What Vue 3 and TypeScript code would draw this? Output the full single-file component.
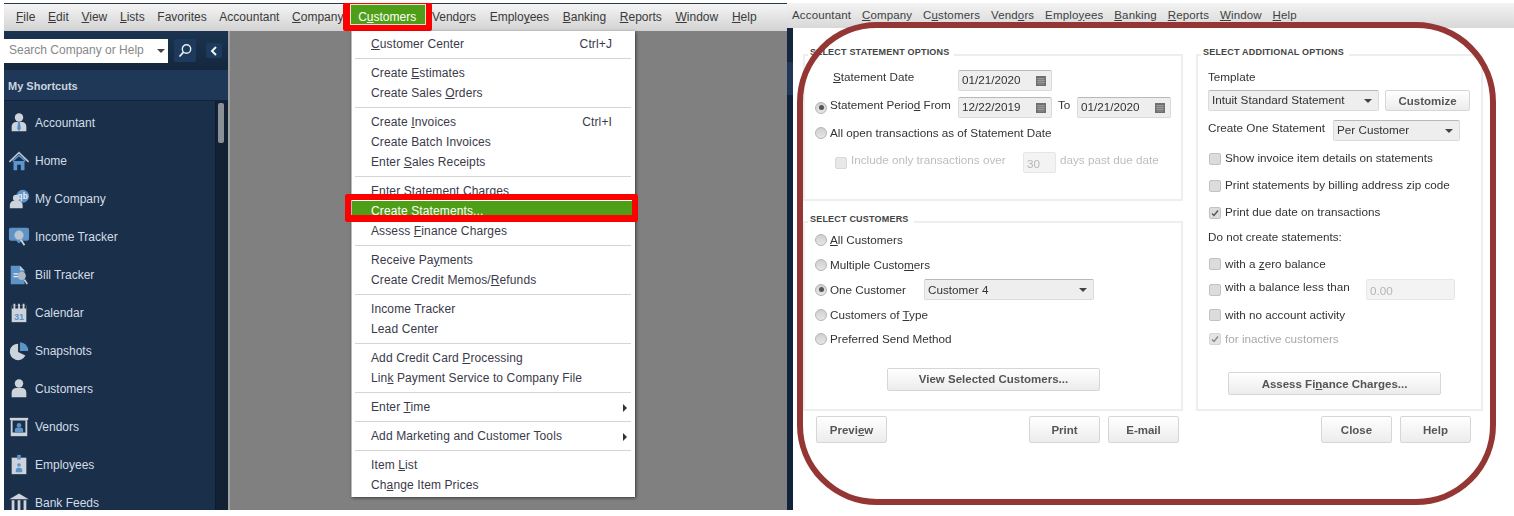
<script setup lang="ts">
const parts = (s: string): [string, string, string] => {
  const i = s.indexOf('&')
  if (i < 0) return [s, '', '']
  return [s.slice(0, i), s.charAt(i + 1), s.slice(i + 2)]
}
const leftMenu = ['&File', '&Edit', '&View', '&Lists', 'Favorites', 'Accountant', '&Company', 'C&ustomers', 'Vend&ors', 'Emplo&yees', '&Banking', '&Reports', '&Window', '&Help']
const rightMenu = ['Accountant', '&Company', 'C&ustomers', 'Vend&ors', 'Emplo&yees', '&Banking', '&Reports', '&Window', '&Help']
const shortcuts = ['Accountant', 'Home', 'My Company', 'Income Tracker', 'Bill Tracker', 'Calendar', 'Snapshots', 'Customers', 'Vendors', 'Employees', 'Bank Feeds']
type Item = { t: string; k?: string; arrow?: boolean; hi?: boolean }
const groups: Item[][] = [
  [{ t: '&Customer Center', k: 'Ctrl+J' }],
  [{ t: 'Create &Estimates' }, { t: 'Create Sales &Orders' }],
  [{ t: 'Create &Invoices', k: 'Ctrl+I' }, { t: 'Create Batch Invoices' }, { t: 'Enter &Sales Receipts' }],
  [{ t: 'Enter Statement Charges' }, { t: 'Create Statements...', hi: true }, { t: 'Assess &Finance Charges' }],
  [{ t: 'Receive Pa&yments' }, { t: 'Create Credit Memos/&Refunds' }],
  [{ t: 'Income Tracker' }, { t: 'Lead Center' }],
  [{ t: 'Add Credit Card &Processing' }, { t: 'Lin&k Payment Service to Company File' }],
  [{ t: 'Enter &Time', arrow: true }],
  [{ t: 'Add Marketing and Customer Tools', arrow: true }],
  [{ t: 'Item &List' }, { t: 'Ch&ange Item Prices' }],
]
</script>

<template>
  <div class="page">
    <section class="qb">
      <nav class="bar">
        <span v-for="m in leftMenu" :key="m" class="bar-item" :class="{ active: m === 'C&ustomers' }">{{ parts(m)[0] }}<u>{{ parts(m)[1] }}</u>{{ parts(m)[2] }}</span>
      </nav>
      <div class="workspace">
        <aside class="side">
          <div class="search-row">
            <div class="search"><span>Search Company or Help</span><i class="tri"></i></div>
            <div class="search-btn">
              <svg width="16" height="16" viewBox="0 0 16 16"><circle cx="9.500" cy="6" r="4.200" fill="none" stroke="#e8eef4" stroke-width="1.400"/><path d="M6.500 9.200 2.500 13.500" stroke="#e8eef4" stroke-width="1.800"/></svg>
            </div>
            <div class="back-btn">
              <svg width="8" height="10" viewBox="0 0 8 10"><path d="M6 1 2 5l4 4" fill="none" stroke="#f2f4f6" stroke-width="2"/></svg>
            </div>
          </div>
          <div class="shortcuts-title">My Shortcuts</div>
          <div class="list">
            <div class="rows">
              <div v-for="s in shortcuts" :key="s" class="row">
                <svg class="ico" width="22" height="22" viewBox="0 0 24 24">
                  <g v-if="s === 'Accountant'">
                    <circle cx="12" cy="6" r="4.600" fill="#ccd3da"/><path d="M4 21v-5c0-3 2-5 5-5h6c3 0 5 2 5 5v5z" fill="#ccd3da"/><path d="M11 11h2l1 7-2 3-2-3z" fill="#5b8fc4"/>
                  </g>
                  <g v-else-if="s === 'Home'">
                    <path d="M6 12h12v10h-4v-6h-4v6H6z" fill="#5b96cf"/><path d="M1.500 13 12 3l10.500 10" fill="none" stroke="#b8c2cc" stroke-width="1.800"/><path d="M5 11 12 5l7 6v2L12 7l-7 6z" fill="#5b96cf"/>
                  </g>
                  <g v-else-if="s === 'My Company'">
                    <circle cx="16" cy="9" r="7" fill="#5e93c8"/><text x="16" y="12" text-anchor="middle" class="qb-mark">qb</text><circle cx="9" cy="11" r="3.600" fill="#ccd3da"/><path d="M2 22v-3c0-3 2-5 5-5h4c3 0 5 2 5 5v3z" fill="#ccd3da"/>
                  </g>
                  <g v-else-if="s === 'Income Tracker'">
                    <path d="M3 2h18a2 2 0 0 1 2 2v10a2 2 0 0 1-2 2h-6l-3 3-3-3H3a2 2 0 0 1-2-2V4a2 2 0 0 1 2-2z" fill="#5e93c8"/><circle cx="12" cy="10" r="5" fill="#b8c4cf"/><path d="M14 15l4 6" stroke="#ccd3da" stroke-width="2"/>
                  </g>
                  <g v-else-if="s === 'Bill Tracker'">
                    <path d="M3 2h10l5 5v15H3z" fill="#5e93c8"/><path d="M13 2v5h5z" fill="#b4cbe0"/><path d="M6 10h5v1.500H6zm0 3h5v1.500H6z" fill="#e8eef4"/><circle cx="15" cy="13" r="4.500" fill="#aeb9c4"/><path d="M18 17l3 5" stroke="#ccd3da" stroke-width="1.800"/>
                  </g>
                  <g v-else-if="s === 'Calendar'">
                    <path d="M4 4h16v18H4z" fill="#ccd3da"/><path d="M6 2h2v5H6zm5 0h2v5h-2zm5 0h2v5h-2z" fill="#ccd3da"/><path d="M4 4h2v3H4zm4 0h3v3H8zm5 0h3v3h-3zm5 0h2v3h-2z" fill="#1a2f4a"/><text x="12" y="20" text-anchor="middle" class="cal-mark">31</text>
                  </g>
                  <g v-else-if="s === 'Snapshots'">
                    <path d="M11 4a9 9 0 1 0 8 13l-8-4z" fill="#ccd3da"/><path d="M13 2.500a9 9 0 0 1 9 9.500h-9z" fill="#5e93c8"/>
                  </g>
                  <g v-else-if="s === 'Customers'">
                    <circle cx="12" cy="6" r="4.600" fill="#ccd3da"/><path d="M4 21v-5c0-3 2-5 5-5h6c3 0 5 2 5 5v5z" fill="#ccd3da"/>
                  </g>
                  <g v-else-if="s === 'Vendors'">
                    <path d="M2 2h20v2.500H2z" fill="#ccd3da"/><path d="M3 4.500h18V22H3z" fill="#ccd3da"/><path d="M5 5h14v13H5z" fill="#1a2f4a"/><circle cx="12" cy="10" r="2.500" fill="#5e93c8"/><path d="M7.500 18v-3c0-1.500 1-2.500 2.500-2.500h4c1.500 0 2.500 1 2.500 2.500v3z" fill="#5e93c8"/>
                  </g>
                  <g v-else-if="s === 'Employees'">
                    <path d="M4 4h16v18H4z" fill="#ccd3da"/><path d="M10 1h4v5h-4z" fill="#5e93c8"/><circle cx="12" cy="12" r="2" fill="#5e93c8"/><path d="M8.500 20v-2.500c0-1.500 1-2.500 2.500-2.500h2c1.500 0 2.500 1 2.500 2.500V20z" fill="#5e93c8"/>
                  </g>
                  <g v-else>
                    <path d="M12 1.500 22.500 8h-21z" fill="#ccd3da"/><path d="M4 9h3v11H4zm6.500 0h3v11h-3zM17 9h3v11h-3z" fill="#ccd3da"/><path d="M2 20h20v4H2z" fill="#5e93c8"/>
                  </g>
                </svg>
                <span>{{ s }}</span>
              </div>
            </div>
            <div class="track"><div class="thumb"></div></div>
          </div>
        </aside>
        <main class="gray"></main>
      </div>

      <div class="menu">
        <template v-for="(g, i) in groups" :key="i">
          <div v-if="i" class="sep"></div>
          <div v-for="it in g" :key="it.t" class="menu-item" :class="{ hi: it.hi }">
            <span>{{ parts(it.t)[0] }}<u>{{ parts(it.t)[1] }}</u>{{ parts(it.t)[2] }}</span>
            <span v-if="it.k">{{ it.k }}</span>
            <i v-if="it.arrow" class="arrow"></i>
          </div>
        </template>
      </div>
      <div class="red red-top"></div>
      <div class="red red-item"></div>
    </section>

    <div class="strip"></div>

    <section class="right">
      <nav class="bar2">
        <span v-for="m in rightMenu" :key="m">{{ parts(m)[0] }}<u>{{ parts(m)[1] }}</u>{{ parts(m)[2] }}</span>
      </nav>
      <div class="dialog">
        <div class="col-left">
          <div class="set set1">
            <div class="legend">SELECT STATEMENT OPTIONS</div>
            <div class="d-row h21">
              <span class="lbl-date raise"><u>S</u>tatement Date</span>
              <div class="field w94 datef"><span>01/21/2020</span><svg class="cal" width="12" height="12" viewBox="0 0 12 12"><path d="M1 1h10v10H1z" fill="#6f6f6f"/><path d="M2 3.500h8M2 5.500h8M2 7.500h8M4 3v7M6 3v7M8 3v7" stroke="#aaa" stroke-width=".6"/></svg></div>
            </div>
            <div class="d-row h21 mt6">
              <i class="radio on"></i>
              <span class="lbl-period raise2">Statement Perio<u>d</u> From</span>
              <div class="field w94 datef"><span>12/22/2019</span><svg class="cal" width="12" height="12" viewBox="0 0 12 12"><path d="M1 1h10v10H1z" fill="#6f6f6f"/><path d="M2 3.500h8M2 5.500h8M2 7.500h8M4 3v7M6 3v7M8 3v7" stroke="#aaa" stroke-width=".6"/></svg></div>
              <span class="to raise2">To</span>
              <div class="field w94 datef"><span>01/21/2020</span><svg class="cal" width="12" height="12" viewBox="0 0 12 12"><path d="M1 1h10v10H1z" fill="#6f6f6f"/><path d="M2 3.500h8M2 5.500h8M2 7.500h8M4 3v7M6 3v7M8 3v7" stroke="#aaa" stroke-width=".6"/></svg></div>
            </div>
            <div class="d-row h20 mt5">
              <i class="radio"></i><span>All open transactions as of Statement Date</span>
            </div>
            <div class="d-row h21 mt9 dim">
              <i class="check sub"></i>
              <span class="lbl-over raise2">Include only transactions over</span>
              <div class="num w33">30</div>
              <span class="days raise2">days past due date</span>
            </div>
          </div>
          <div class="set set2">
            <div class="legend">SELECT CUSTOMERS</div>
            <div class="c-row"><i class="radio"></i><span><u>A</u>ll Customers</span></div>
            <div class="c-row"><i class="radio"></i><span>Multiple Custo<u>m</u>ers</span></div>
            <div class="c-row"><i class="radio on"></i><span class="lbl-one">One Customer</span>
              <div class="field w170"><span>Customer 4</span><i class="tri"></i></div>
            </div>
            <div class="c-row"><i class="radio"></i><span>Customers of <u>T</u>ype</span></div>
            <div class="c-row"><i class="radio"></i><span>Preferred Send Method</span></div>
            <button class="btn view">View Selected Customers...</button>
          </div>
          <div class="foot">
            <button class="btn fb">Previ<u>e</u>w</button>
            <div class="foot-end">
              <button class="btn fb">Print</button>
              <button class="btn fb">E-mail</button>
            </div>
          </div>
        </div>

        <div class="col-right">
          <div class="set set3">
            <div class="legend">SELECT ADDITIONAL OPTIONS</div>
            <div class="d-row h20">Template</div>
            <div class="d-row h21 mt3">
              <div class="field w171"><span>Intuit Standard Statement</span><i class="tri"></i></div>
              <button class="btn customize">Customize</button>
            </div>
            <div class="d-row h21 mt9">
              <span class="lbl-create raise2">Create One Statement</span>
              <div class="field w127"><span>Per Customer</span><i class="tri"></i></div>
            </div>
            <div class="chk-row first"><i class="check"></i><span>Show invoice item details on statements</span></div>
            <div class="chk-row"><i class="check"></i><span>Print statements by billing address zip code</span></div>
            <div class="chk-row"><i class="check"><svg width="10" height="10" viewBox="0 0 10 10"><path d="M2 5.500 4 7.500 8 2.500" fill="none" stroke="#555" stroke-width="1.400"/></svg></i><span>Print due date on transactions</span></div>
            <div class="d-row h22">Do not create statements:</div>
            <div class="d-row h22 mt5"><i class="check gap"></i><span>with a <u>z</u>ero balance</span></div>
            <div class="d-row h21 mt4 balance">
              <i class="check gap raise2"></i><span class="lbl-bal raise2">with a balance less than</span>
              <div class="num w89">0.00</div>
            </div>
            <div class="d-row h22 mt4"><i class="check gap"></i><span>with no account activity</span></div>
            <div class="d-row h22 mt2 dim-text"><i class="check gap faded"><svg width="10" height="10" viewBox="0 0 10 10"><path d="M2 5.500 4 7.500 8 2.500" fill="none" stroke="#888" stroke-width="1.400"/></svg></i><span>for inactive customers</span></div>
            <button class="btn assess">Assess Fi<u>n</u>ance Charges...</button>
          </div>
          <div class="foot foot-r">
            <button class="btn fb">Close</button>
            <button class="btn fb">Help</button>
          </div>
        </div>
      </div>
      <div class="ring"></div>
    </section>
  </div>
</template>

<style>
html, body { margin: 0; background: #fff; }
</style>

<style scoped>
.page { width: 1514px; height: 510px; display: flex; background: #fff; overflow: hidden; font: 12px/1.2 "Liberation Sans", Arial, sans-serif; color: #333; }
u { text-underline-offset: 1px; }

.qb { position: relative; width: 783px; margin-left: 4px; padding-top: 3px; display: flex; flex-direction: column; flex: none; box-sizing: border-box; height: 510px; }
.bar { height: 28px; flex: none; display: flex; align-items: center; gap: 12.700px; padding-left: 12px; box-sizing: border-box; border-top: 1px solid #2b3a4a; background: linear-gradient(#f5f5f5, #d2d2d2); color: #3a3a3a; }
.bar-item.active { color: #fff; position: relative; z-index: 2; margin: 0 2px; }
.active ~ .bar-item { margin-left: 1px; }
.workspace { flex: 1; display: flex; min-height: 0; }
.side { width: 224px; flex: none; display: flex; flex-direction: column; background: #1a2f4a; }
.search-row { height: 39px; flex: none; display: flex; align-items: center; background: linear-gradient(#1b3350, #14273e); }
.search { width: 164px; height: 24px; background: #fff; display: flex; align-items: center; justify-content: space-between; padding: 0 3px 0 5px; box-sizing: border-box; color: #888; }
.tri { width: 0; height: 0; border-left: 4px solid transparent; border-right: 4px solid transparent; border-top: 4px solid #444; flex: none; }
.search-btn { width: 22px; height: 23px; margin-left: 6px; background: #1d3a5d; border-radius: 2px; display: flex; align-items: center; justify-content: center; }
.back-btn { width: 16px; height: 15px; margin-left: 10px; background: #1d3a5d; border-radius: 2px; display: flex; align-items: center; justify-content: center; }
.shortcuts-title { height: 31px; flex: none; line-height: 32px; padding-left: 4px; font-weight: 700; font-size: 11px; color: #c9d4df; background: #1f3858; box-sizing: border-box; border-bottom: 1px solid #10233a; }
.list { flex: 1; display: flex; min-height: 0; overflow: hidden; }
.rows { flex: 1; padding-top: 3px; min-width: 0; }
.row { height: 38px; display: flex; align-items: center; color: #d3dde7; }
.ico { margin: 0 5px 0 4px; flex: none; }
.qb-mark { font: 700 9px "Liberation Sans", sans-serif; fill: #e8eef4; }
.cal-mark { font: 700 10px "Liberation Sans", sans-serif; fill: #5e93c8; }
.track { width: 13px; flex: none; background: #122234; border-left: 1px solid #0e1b2b; box-sizing: border-box; padding: 2px 0 0 2px; }
.thumb { width: 6px; height: 40px; background: #8b9096; border-radius: 2px; }
.gray { flex: 1; background: #808080; border-left: 2px solid #a2a2a2; }

.menu { position: absolute; left: 347px; top: 31px; width: 284px; height: 466px; box-sizing: border-box; padding: 3px 4px 0 3px; background: #fff; box-shadow: 1px 1px 3px rgba(0,0,0,.55); border-left: 1px solid #bbb; z-index: 2; color: #3a3a4a; letter-spacing: .12px; }
.menu-item { height: 20px; display: flex; align-items: center; justify-content: space-between; padding: 0 19px 0 16px; position: relative; box-sizing: border-box; }
.menu-item.hi { background: #4f9e18; color: #fff; margin: 0 -4px 0 -3px; padding-left: 19px; }
.sep { height: 1px; margin: 4px 0; background: #d4d4d4; }
.arrow { position: absolute; right: 4px; top: 7px; width: 0; height: 0; border-top: 4px solid transparent; border-bottom: 4px solid transparent; border-left: 4px solid #333; }

.red { position: absolute; border-style: solid; border-color: #f00; box-sizing: border-box; border-radius: 2px; z-index: 3; }
.red-top { left: 339px; top: 3px; width: 89px; height: 28px; border-width: 1px 6px 6px 7px; box-shadow: inset 0 0 0 1px #dfe8d8; background: #4f9e18; z-index: 1; }
.red-item { left: 341px; top: 194px; width: 293px; height: 28px; border-width: 6px 6px 7px; }

.strip { width: 6px; flex: none; background: linear-gradient(#fff 0 3px, #d9d9d9 3px 28px, #14273e 28px 62px, #1f3858 62px 95px, #10233a 95px); }

.right { position: relative; flex: 1; min-width: 0; margin-left: -6px; padding-left: 6px; z-index: 4; display: flex; flex-direction: column; background: transparent; }
.bar2 { height: 25px; margin: 3px 0 0 -6px; flex: none; display: flex; align-items: center; gap: 10.800px; padding-left: 5px; font-size: 11.500px; letter-spacing: .16px; color: #3f3f3f; background: linear-gradient(#f3f3f3, #d8d8d8); }
.dialog { display: flex; gap: 13px; padding: 26px 0 0 10px; filter: blur(.25px); font-size: 11.700px; }
.col-left { width: 380px; flex: none; }
.col-right { width: 287px; flex: none; }
.set { position: relative; box-sizing: border-box; border: 2px solid #eeeeee; padding-left: 10px; }
.set1 { height: 147px; padding-top: 14px; }
.set2 { height: 190px; margin-top: 20px; padding-top: 5px; }
.set3 { height: 357px; padding-top: 11px; color: #333; }
.legend { position: absolute; left: 3px; top: -10px; height: 13px; line-height: 13px; padding: 0 5px 0 2px; background: #fff; font-size: 9px; font-weight: 700; color: #444; letter-spacing: .2px; }
.d-row { display: flex; align-items: center; }
.h20 { height: 20px; } .h21 { height: 21px; } .h22 { height: 22px; }
.mt2 { margin-top: 2px; } .mt3 { margin-top: 3px; } .mt4 { margin-top: 4px; } .mt5 { margin-top: 5px; } .mt6 { margin-top: 6px; } .mt9 { margin-top: 9px; }
.raise { margin-bottom: 6px; } .raise2 { margin-bottom: 4px; }
.lbl-date { width: 125px; margin-left: 18px; flex: none; }
.lbl-period { width: 128px; flex: none; }
.to { width: 19px; margin-left: 6px; flex: none; }
.lbl-over { width: 172px; flex: none; }
.days { margin-left: 4px; }
.dim { color: #bdbdbd; }
.dim-text { color: #a9a9a9; }
.radio { width: 12px; height: 12px; margin-right: 3px; border-radius: 50%; flex: none; box-sizing: border-box; border: 1px solid #b4b4b4; background: linear-gradient(#cfcfcf, #e6e6e6); position: relative; }
.radio.on::after { content: ""; position: absolute; left: 2.500px; top: 2.500px; width: 5px; height: 5px; border-radius: 50%; background: #555; }
.check { width: 12px; height: 12px; flex: none; box-sizing: border-box; border: 1px solid #c2c2c2; border-radius: 2px; background: #dcdcdc; display: flex; align-items: center; justify-content: center; }
.check.sub { margin: 0 4px 0 20px; background: #e8e8e8; border-color: #d8d8d8; }
.check.gap { margin: 0 4px 0 1px; }
.check.faded { background: #e4e4e4; border-color: #d6d6d6; }
.field { height: 21px; flex: none; box-sizing: border-box; display: flex; align-items: center; justify-content: space-between; padding: 0 6px 0 3px; color: #333; background: #eeeeee; border: 1px solid #dadada; border-top-color: #b9b9b9; border-radius: 2px; }
.field.datef { padding-right: 4px; }
.w94 { width: 94px; } .w170 { width: 170px; } .w171 { width: 171px; } .w127 { width: 127px; }
.num { height: 21px; box-sizing: border-box; flex: none; background: #f3f3f3; border: 1px solid #e6e6e6; border-radius: 2px; padding: 4px 3px; color: #b5b5b5; }
.w33 { width: 33px; } .w89 { width: 89px; }
.c-row { height: 24.750px; display: flex; align-items: center; }
.lbl-one { width: 94px; flex: none; }
.btn { font: 700 11.500px "Liberation Sans", sans-serif; color: #555; background: linear-gradient(#fff, #ececec); border: 1px solid #d6d6d6; border-radius: 2px; padding: 0; box-sizing: border-box; display: block; }
.view { width: 213px; height: 23px; margin: 16px 0 0 72px; }
.foot { height: 27px; margin-top: 5px; display: flex; justify-content: space-between; padding: 0 4px 0 13px; }
.foot-end { display: flex; gap: 8px; }
.fb { width: 71px; height: 27px; }
.foot-r { justify-content: flex-end; gap: 8px; padding: 0 12px 0 0; }
.customize { width: 85px; height: 21px; margin-left: 6px; }
.lbl-create { width: 125px; flex: none; }
.chk-row { height: 27px; display: flex; align-items: center; gap: 4px; padding-left: 1px; }
.chk-row.first { margin-top: 4px; }
.lbl-bal { width: 141px; flex: none; }
.assess { width: 213px; height: 23px; margin: 22px 0 0 20px; }
.ring { position: absolute; left: 10px; top: 22px; width: 699px; height: 483px; box-sizing: border-box; border: 6px solid #943634; border-radius: 80px; pointer-events: none; }
</style>
